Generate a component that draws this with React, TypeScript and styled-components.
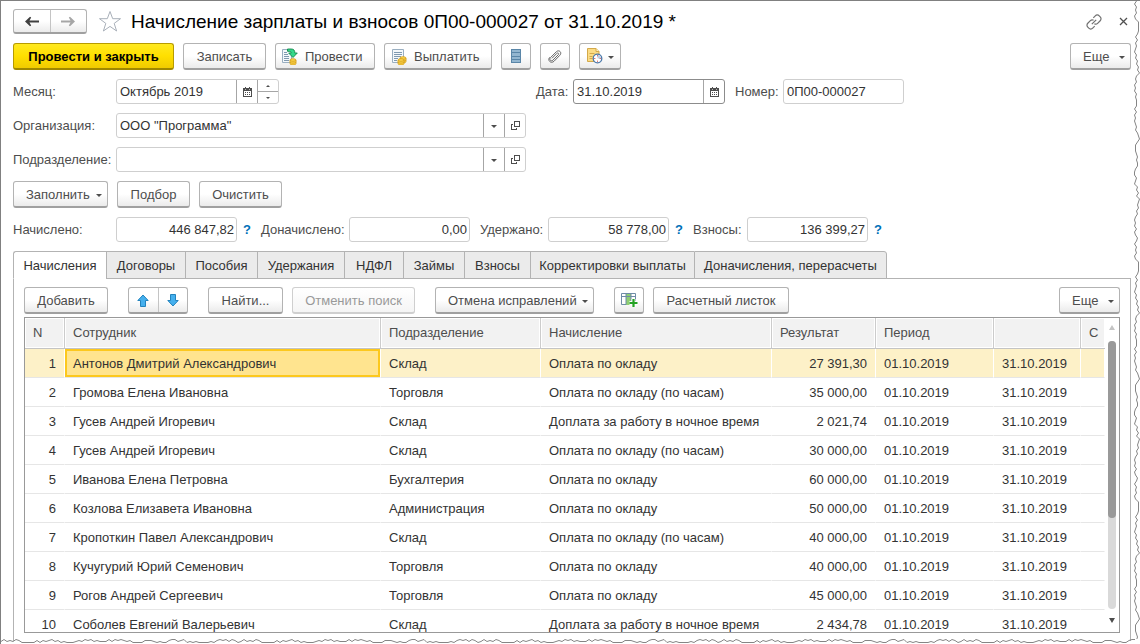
import React from "react";
import styled, { createGlobalStyle, css } from "styled-components";

const GlobalStyle = createGlobalStyle`
  *, *::before, *::after { box-sizing: border-box; }
  body { margin: 0; background: #fff; }
  body, button, input { font-family: "Liberation Sans", Arial, sans-serif; font-size: 13px; line-height: 15px; color: #4d4d4d; }
  button, input { margin: 0; padding: 0; border: 0; background: none; }
  svg { display: block; flex: none; }
`;

/* ---------- layout ---------- */

const Window = styled.main`
  position: relative;
  display: flex;
  flex-direction: column;
  gap: 9px;
  height: 100vh;
  min-height: 480px;
  padding: 8px 9px 3px 12px;
  border-left: 1px solid #808080;
  border-top: 1px solid #808080;
  overflow: hidden;
`;

const TitleRow = styled.header`
  display: flex;
  align-items: center;
  height: 25px;
`;

const Title = styled.h1`
  flex: 1;
  margin: 0 0 0 9px;
  font-size: 19px;
  line-height: 24px;
  font-weight: 400;
  color: #000;
  white-space: nowrap;
`;

const Bar = styled.div`
  display: flex;
  align-items: center;
  gap: 9px;
`;

const Spacer = styled.span`
  flex: 1;
`;

const Row = styled.div`
  display: flex;
  align-items: center;
  gap: 10px;
`;

const FormColumn = styled.div`
  display: flex;
  align-items: center;
  flex: 0 1 513px;
`;

const FieldGroup = styled.div`
  display: flex;
  align-items: center;
  gap: 6px;
`;

const Label = styled.label<{ $width?: number }>`
  flex: none;
  white-space: nowrap;
  ${(p) => p.$width && css`width: ${p.$width}px;`}
`;

/* ---------- controls ---------- */

const raised = css`
  border: 1px solid #b3b3b3;
  border-bottom: 2px solid #a0a0a0;
  border-radius: 3px;
  background: linear-gradient(#fff 0%, #fff 50%, #ebebeb 100%);
`;

const Button = styled.button<{ $width: number; $primary?: boolean; $menu?: boolean }>`
  ${raised}
  display: inline-flex;
  align-items: center;
  justify-content: ${(p) => (p.$menu ? "space-between" : "center")};
  flex: none;
  width: ${(p) => p.$width}px;
  height: 27px;
  padding: ${(p) => (p.$menu ? "0 5px 0 12px" : "0")};
  white-space: nowrap;
  ${(p) =>
    p.$primary &&
    css`
      border-color: #b79b00;
      border-bottom-color: #a08800;
      background: linear-gradient(#ffe920, #ffdf00 50%, #f0cb00);
      color: #000;
      font-weight: 700;
    `}
  &:disabled {
    color: #999;
    border-color: #cfcfcf;
    background: linear-gradient(#fff, #f5f5f5);
  }
`;

const WithIcon = styled(Button)`
  gap: 7px;
  justify-content: flex-start;
  padding: 0 0 0 6px;
`;

const IconMenuButton = styled(Button)`
  padding: 0 6px 0 7px;
`;

const Split = styled.div<{ $size: "nav" | "move" }>`
  ${raised}
  display: flex;
  flex: none;
  height: ${(p) => (p.$size === "nav" ? 25 : 27)}px;
  width: ${(p) => (p.$size === "nav" ? 74 : 60)}px;
  margin: ${(p) => (p.$size === "nav" ? "0" : "0 11px")};
`;

const SplitButton = styled.button`
  flex: 1;
  display: flex;
  align-items: center;
  justify-content: center;
  & + & {
    border-left: 1px solid #c4c4c4;
  }
`;

const BareButton = styled.button`
  display: flex;
  align-items: center;
  justify-content: center;
`;

const HeaderTools = styled.div`
  display: flex;
  align-items: center;
  gap: 17px;
  padding-right: 3px;
`;

const StarButton = styled(BareButton)`
  margin-left: 10px;
  width: 25px;
`;

const Triangle = styled.span`
  width: 0;
  border: 3px solid transparent;
  border-top-color: #4d4d4d;
  border-bottom: 0;
  margin-top: 2px;
`;

const FieldBox = styled.div<{ $width?: number; $strong?: boolean }>`
  display: flex;
  height: 25px;
  ${(p) => (p.$width ? css`flex: none; width: ${p.$width}px;` : css`flex: 1; min-width: 0;`)}
  border: 1px solid ${(p) => (p.$strong ? "#8c8c8c" : "#cfcfcf")};
  border-radius: 3px;
  background: #fff;
`;

const Input = styled.input<{ $right?: boolean }>`
  flex: 1;
  min-width: 0;
  width: 100%;
  padding: 0 2px 0 3px;
  color: #333;
  text-align: ${(p) => (p.$right ? "right" : "left")};
  outline: 0;
`;

const FieldButton = styled.button`
  display: flex;
  align-items: center;
  justify-content: center;
  flex: none;
  width: 21px;
  border-left: 1px solid #a6a6a6;
`;

const Spinner = styled.div`
  display: flex;
  flex-direction: column;
  flex: none;
  width: 21px;
  border-left: 1px solid #a6a6a6;
`;

const SpinButton = styled.button`
  flex: 1;
  display: flex;
  align-items: center;
  justify-content: center;
  & + & {
    border-top: 1px solid #a6a6a6;
  }
`;

const Help = styled.button`
  width: 8px;
  color: #0070b8;
  font-weight: 700;
`;

const MenuGroup = styled.div`
  display: flex;
  margin: 0 11px;
`;

/* ---------- tabs and panel ---------- */

const TabArea = styled.section`
  display: flex;
  flex-direction: column;
  flex: 1;
  min-height: 0;
`;

const TabList = styled.div`
  display: flex;
  position: relative;
  z-index: 1;
  margin-bottom: -1px;
`;

const Tab = styled.button<{ $active?: boolean; $width: number }>`
  flex: none;
  width: ${(p) => p.$width}px;
  height: 28px;
  color: #333;
  white-space: nowrap;
  border: 1px solid #b3b3b3;
  border-right-width: 0;
  border-bottom-color: ${(p) => (p.$active ? "#fff" : "#b3b3b3")};
  background: ${(p) => (p.$active ? "#fff" : "#ebebeb")};
  &:first-child {
    border-top-left-radius: 3px;
  }
  &:last-child {
    border-right-width: 1px;
    border-top-right-radius: 3px;
  }
`;

const Panel = styled.div`
  display: flex;
  flex-direction: column;
  flex: 1;
  min-height: 0;
  gap: 3px;
  padding: 8px 10px;
  border: 1px solid #b3b3b3;
  border-bottom: 0;
`;

const TableFrame = styled.div`
  display: flex;
  flex: 1;
  min-height: 0;
  border: 1px solid #999;
  overflow: hidden;
`;

const TableView = styled.div`
  flex: 1;
  min-width: 0;
  overflow: hidden;
`;

const Table = styled.table`
  width: 100%;
  table-layout: fixed;
  border-collapse: separate;
  border-spacing: 0;
`;

const Col = styled.col<{ $width?: number }>`
  ${(p) => p.$width && css`width: ${p.$width}px;`}
`;

const HeadCell = styled.th`
  height: 31px;
  padding: 0 0 2px 8px;
  overflow: hidden;
  white-space: nowrap;
  text-align: left;
  font-weight: 400;
  background: #f2f2f2;
  border-right: 1px solid #ccc;
  border-bottom: 1px solid #c4c4c4;
  box-shadow: inset 0 0 0 1px #fff;
  &:last-child {
    border-right: 0;
  }
`;

const Cell = styled.td<{ $right?: boolean }>`
  height: 29px;
  padding: 0 8px;
  overflow: hidden;
  white-space: nowrap;
  color: #333;
  text-align: ${(p) => (p.$right ? "right" : "left")};
  border-right: 1px solid transparent;
  border-bottom: 1px solid #e6e6e6;
`;

const CurrentCell = styled(Cell)`
  &&& {
    background: #ffe48f;
    background-clip: padding-box;
    box-shadow: inset 0 0 0 2px #fcc81e;
  }
`;

const BodyRow = styled.tr<{ $selected?: boolean }>`
  ${(p) =>
    p.$selected &&
    css`
      ${Cell} {
        background: #fdf1c8;
        border-right-color: #fff;
      }
    `}
`;

const ScrollBar = styled.div`
  display: flex;
  flex-direction: column;
  align-items: center;
  flex: none;
  width: 14px;
  padding: 7px 0 9px;
`;

const ScrollArrow = styled.button<{ $up?: boolean }>`
  width: 0;
  height: 5px;
  border: 3px solid transparent;
  ${(p) =>
    p.$up
      ? css`border-top: 0; border-bottom: 5px solid #c4c4c4;`
      : css`border-bottom: 0; border-top: 5px solid #4d4d4d;`}
`;

const ScrollTrack = styled.div`
  flex: 1;
  width: 8px;
  margin: 11px 0 9px;
  border-radius: 4px;
  background: #d9d9d9;
`;

const ScrollThumb = styled.div`
  height: 66%;
  border-radius: 4px;
  background: #999;
`;

const TornRight = styled.svg`
  position: absolute;
  top: 0;
  right: 0;
  width: 8px;
  height: calc(100% - 5px);
  pointer-events: none;
`;

const TornBottom = styled.svg`
  position: absolute;
  left: 0;
  bottom: 0;
  width: calc(100% - 5px);
  height: 7px;
  pointer-events: none;
`;

/* ---------- icons ---------- */

const Arrow = ({ right }: { right?: boolean }) => (
  <svg width="14" height="11" viewBox="0 0 14 11" fill={right ? "#a6a6a6" : "#404040"}>
    {right ? <path d="M0 4.500h9.500L7.800 1.500 9 .7l5 4.800-5 4.800-1.200-.8 1.700-3H0z" /> : <path d="M14 4.500H4.500l1.700-3L5 .7 0 5.500l5 4.800 1.200-.8-1.700-3H14z" />}
  </svg>
);

const Star = () => (
  <svg width="24" height="23" viewBox="0 0 24 23" fill="#fff" stroke="#a9b0b9">
    <path d="M12 1.500l2.700 7.200h7.800l-6.300 4.700 2.400 7.600L12 16.400 5.400 21l2.400-7.600-6.300-4.700h7.800z" />
  </svg>
);

const LinkIcon = () => (
  <svg width="16" height="16" viewBox="0 0 16 16" fill="none" stroke="#707070" strokeWidth="1.200">
    <path d="M7.300 3.800l2-2a2.700 2.700 0 0 1 3.900 0l1 1a2.700 2.700 0 0 1 0 3.900l-2.600 2.600a2.700 2.700 0 0 1-3.200.4M8.700 12.200l-2 2a2.700 2.700 0 0 1-3.900 0l-1-1a2.700 2.700 0 0 1 0-3.900l2.600-2.600a2.700 2.700 0 0 1 3.200-.4M5.800 10.200l4.400-4.400" />
  </svg>
);

const Cross = () => (
  <svg width="9" height="9" viewBox="0 0 9 9" stroke="#505050" strokeWidth="1.300">
    <path d="M1 1l7 7M8 1L1 8" />
  </svg>
);

const Coins = ({ x, y }: { x: number; y: number }) => (
  <g transform={`translate(${x} ${y})`} fill="#fbd34b" stroke="#d4a01c" strokeWidth=".8">
    <path d="M.5 2v3.500c0 2 6 2 6 0V2" />
    <path d="M.5 3.800c0 1.800 6 1.800 6 0" fill="none" />
    <ellipse cx="3.500" cy="2" rx="3" ry="1.300" />
  </g>
);

const PostIcon = () => (
  <svg width="16" height="17" viewBox="0 0 16 17">
    <path d="M.5 1.500h9v13h-9z" fill="#f4f8fb" stroke="#9aafc1" />
    <path d="M2 4.500h3M2 6.500h4M2 8.500h5M2 10.500h5M2 12.500h5" stroke="#7f99b0" />
    <path d="M5.500 1H9c3 0 3.800 1.500 3.800 4h2.500l-4.300 4.500L6.700 5h2.500c0-1.200-.7-1.700-3.700-1.700z" fill="#35d88a" stroke="#128a4c" strokeWidth=".9" />
    <Coins x={7.500} y={10} />
  </svg>
);

const PayIcon = () => (
  <svg width="16" height="17" viewBox="0 0 16 17">
    <path d="M1.500 1.500h11v13h-11z" fill="#f4f8fb" stroke="#9aafc1" />
    <path d="M3 4.500h8M3 6.500h8M3 8.500h7M3 10.500h4M3 12.500h3" stroke="#7f99b0" />
    <Coins x={8.500} y={8} />
    <Coins x={6.500} y={10} />
  </svg>
);

const ListIcon = () => (
  <svg width="10" height="14" viewBox="0 0 10 14" shapeRendering="crispEdges">
    <path d="M0 0h10v14H0z" fill="#5a86a8" />
    <path d="M1 1h8v2H1zM1 4h8v3H1zM1 8h8v2H1zM1 11h8v2H1z" fill="#93b6d0" />
  </svg>
);

const Clip = () => (
  <svg width="14" height="14" viewBox="0 0 14 14" fill="none" stroke="#666">
    <path d="M4 9.300l4.800-4.900c1.200-1.200 2.600.2 1.400 1.400L5 11.100c-1.900 1.900-4.400-.6-2.500-2.500L8.300 2.800c2.700-2.700 6.200.8 3.500 3.500L6 12.300c-3 2.800-7-1-4.300-4" />
  </svg>
);

const ReportIcon = () => (
  <svg width="16" height="16" viewBox="0 0 16 16">
    <path d="M.5.500h8.500l3 3v10H.5z" fill="#fbdc85" stroke="#d3a94a" />
    <path d="M9 .5v3h3" fill="#fff2c4" stroke="#d3a94a" />
    <path d="M2.500 5.500h5M2.500 8.500h3M2.500 10.500h3" stroke="#d3a94a" />
    <circle cx="10.500" cy="10.500" r="4.300" fill="#fff" stroke="#4b78a8" strokeWidth="1.300" />
    <path d="M10.500 10.500V7A3.500 3.500 0 0 1 14 10.500z" fill="#b9cfe6" />
    <path d="M10.500 7.300v1M10.500 12.700v1M7.300 10.500h1M12.700 10.500h1" stroke="#d23c3c" />
  </svg>
);

const Calendar = () => (
  <svg width="9" height="10" viewBox="0 0 9 10" shapeRendering="crispEdges">
    <path d="M0 1h9v9H0z" fill="#4d4d4d" />
    <path d="M2 0h1v1H2zM6 0h1v1H6z" fill="#4d4d4d" />
    <path d="M1 4h7v5H1z" fill="#fff" />
    <path d="M2 5h1v1H2zM4 5h1v1H4zM6 5h1v1H6zM2 7h1v1H2zM4 7h1v1H4zM6 7h1v1H6z" fill="#4d4d4d" />
    <path d="M2 2h1v1H2zM6 2h1v1H6z" fill="#bbb" />
  </svg>
);

const OpenIcon = () => (
  <svg width="9" height="9" viewBox="0 0 9 9" fill="none" stroke="#4d4d4d" shapeRendering="crispEdges">
    <path d="M3.500.5h5v5h-5zM2 3.500H.5v5h5V7" />
  </svg>
);

const MoveArrow = ({ down }: { down?: boolean }) => (
  <svg width="12" height="13" viewBox="0 0 12 13" fill="#45b0ee" stroke="#2383bd">
    <path d={down ? "M6 12L.8 6.500h2.700v-6h5v6h2.700z" : "M6 1l5.200 5.500H8.500v6h-5v-6H.8z"} />
  </svg>
);

const AddColumn = () => (
  <svg width="17" height="15" viewBox="0 0 17 15">
    <path d="M.5.500h14v11H.5z" fill="#fff" stroke="#6f8ca6" />
    <path d="M5 1h5v11H5z" fill="#8fce72" />
    <path d="M.5 3.500h14M5 .5v11M10 .5v11" stroke="#6f8ca6" fill="none" />
    <path d="M12.500 6v8M8.500 10h8" stroke="#fff" strokeWidth="4" />
    <path d="M12.500 6v8M8.500 10h8" stroke="#25a325" strokeWidth="2.200" />
  </svg>
);

/* Offsets of the torn line across its edge, one every three pixels. */
const tornProfile = [
  4, 2, 4, 3, 4, 2, 3, 6, 6, 6, 6, 5, 3, 5, 3, 4, 3, 2, 4, 3, 5, 4, 6, 5, 7, 4, 3, 4, 2, 3, 2, 4, 3, 4, 4, 4, 2, 4, 2, 3, 2, 3, 4, 3,
  5, 6, 7, 5, 3, 3, 3, 4, 5, 4, 5, 5, 3, 2, 2, 4, 3, 2, 5, 4, 6, 4, 7, 6, 5, 6, 4, 5, 3, 2, 3, 2, 4, 2, 3, 5,
];
const tornLength = tornProfile.length * 3;
const tornPoints = (across: (offset: number, along: number) => string) =>
  [...tornProfile, tornProfile[0]].map((offset, i) => across(offset, i * 3)).join(" ");

const TornEdges = () => (
  <>
    <TornRight>
      <defs>
        <pattern id="torn-v" width="8" height={tornLength} patternUnits="userSpaceOnUse">
          <polyline points={tornPoints((o, t) => `${o + 0.5},${t}`)} fill="none" stroke="#858585" />
        </pattern>
      </defs>
      <rect width="8" height="100%" fill="url(#torn-v)" />
    </TornRight>
    <TornBottom>
      <defs>
        <pattern id="torn-h" width={tornLength} height="7" patternUnits="userSpaceOnUse">
          <polyline points={tornPoints((o, t) => `${t},${o > 5 ? 5.5 : o + 0.5}`)} fill="none" stroke="#858585" />
        </pattern>
      </defs>
      <rect y="5" width="100%" height="2" fill="#fff" />
      <rect width="100%" height="7" fill="url(#torn-h)" />
    </TornBottom>
  </>
);

/* ---------- data ---------- */

const tabs = [
  { title: "Начисления", width: 93 },
  { title: "Договоры", width: 79 },
  { title: "Пособия", width: 72 },
  { title: "Удержания", width: 87 },
  { title: "НДФЛ", width: 59 },
  { title: "Займы", width: 61 },
  { title: "Взносы", width: 66 },
  { title: "Корректировки выплаты", width: 164 },
  { title: "Доначисления, перерасчеты", width: 193 },
];

const columns: { title: string; width?: number }[] = [
  { title: "N", width: 40 },
  { title: "Сотрудник" },
  { title: "Подразделение", width: 160 },
  { title: "Начисление", width: 231 },
  { title: "Результат", width: 104 },
  { title: "Период", width: 118 },
  { title: "", width: 87 },
  { title: "С", width: 24 },
];

const rows = [
  ["Антонов Дмитрий Александрович", "Склад", "Оплата по окладу", "27 391,30"],
  ["Громова Елена Ивановна", "Торговля", "Оплата по окладу (по часам)", "35 000,00"],
  ["Гусев Андрей Игоревич", "Склад", "Доплата за работу в ночное время", "2 021,74"],
  ["Гусев Андрей Игоревич", "Склад", "Оплата по окладу (по часам)", "30 000,00"],
  ["Иванова Елена Петровна", "Бухгалтерия", "Оплата по окладу", "60 000,00"],
  ["Козлова Елизавета Ивановна", "Администрация", "Оплата по окладу", "50 000,00"],
  ["Кропоткин Павел Александрович", "Склад", "Оплата по окладу (по часам)", "40 000,00"],
  ["Кучугурий Юрий Семенович", "Торговля", "Оплата по окладу", "40 000,00"],
  ["Рогов Андрей Сергеевич", "Торговля", "Оплата по окладу", "45 000,00"],
  ["Соболев Евгений Валерьевич", "Склад", "Доплата за работу в ночное время", "2 434,78"],
];

const totals = [
  { id: "accrued", label: "Начислено:", width: 97, value: "446 847,82", help: true },
  { id: "extra", label: "Доначислено:", width: 82, value: "0,00", help: false },
  { id: "withheld", label: "Удержано:", width: 62, value: "58 778,00", help: true },
  { id: "fees", label: "Взносы:", width: 48, value: "136 399,27", help: true },
];

const LookupField = ({ id, label, value }: { id: string; label: string; value: string }) => (
  <Row>
    <FormColumn>
      <Label $width={103} htmlFor={id}>{label}</Label>
      <FieldBox>
        <Input id={id} defaultValue={value} />
        <FieldButton aria-label="Выбрать"><Triangle /></FieldButton>
        <FieldButton aria-label="Открыть"><OpenIcon /></FieldButton>
      </FieldBox>
    </FormColumn>
  </Row>
);

export default function App() {
  return (
    <>
      <GlobalStyle />
      <Window>
        <TitleRow>
          <Split $size="nav">
            <SplitButton aria-label="Назад"><Arrow /></SplitButton>
            <SplitButton aria-label="Вперед"><Arrow right /></SplitButton>
          </Split>
          <StarButton aria-label="В избранное"><Star /></StarButton>
          <Title>Начисление зарплаты и взносов 0П00-000027 от 31.10.2019 *</Title>
          <HeaderTools>
            <BareButton aria-label="Ссылка"><LinkIcon /></BareButton>
            <BareButton aria-label="Закрыть"><Cross /></BareButton>
          </HeaderTools>
        </TitleRow>

        <Bar>
          <Button $width={161} $primary>Провести и закрыть</Button>
          <Button $width={83}>Записать</Button>
          <WithIcon $width={100}><PostIcon />Провести</WithIcon>
          <WithIcon $width={108}><PayIcon />Выплатить</WithIcon>
          <Button $width={30} aria-label="Список"><ListIcon /></Button>
          <Button $width={30} aria-label="Файлы"><Clip /></Button>
          <IconMenuButton $width={42} $menu aria-label="Отчеты"><ReportIcon /><Triangle /></IconMenuButton>
          <Spacer />
          <Button $width={61} $menu>Еще<Triangle /></Button>
        </Bar>

        <Row>
          <FormColumn>
            <Label $width={103} htmlFor="month">Месяц:</Label>
            <FieldBox $width={163}>
              <Input id="month" defaultValue="Октябрь 2019" />
              <FieldButton aria-label="Календарь"><Calendar /></FieldButton>
              <Spinner>
                <SpinButton aria-label="Больше">
                  <svg width="4" height="2"><path d="M0 2l2-2 2 2z" fill="#4d4d4d" /></svg>
                </SpinButton>
                <SpinButton aria-label="Меньше">
                  <svg width="4" height="2"><path d="M0 0l2 2 2-2z" fill="#4d4d4d" /></svg>
                </SpinButton>
              </Spinner>
            </FieldBox>
          </FormColumn>
          <FieldGroup>
            <Label $width={31} htmlFor="date">Дата:</Label>
            <FieldBox $width={152} $strong>
              <Input id="date" defaultValue="31.10.2019" />
              <FieldButton aria-label="Календарь"><Calendar /></FieldButton>
            </FieldBox>
          </FieldGroup>
          <FieldGroup>
            <Label $width={42} htmlFor="number">Номер:</Label>
            <FieldBox $width={121}>
              <Input id="number" defaultValue="0П00-000027" />
            </FieldBox>
          </FieldGroup>
        </Row>

        <LookupField id="org" label="Организация:" value={'ООО "Программа"'} />
        <LookupField id="dept" label="Подразделение:" value="" />

        <Bar>
          <Button $width={95} $menu>Заполнить<Triangle /></Button>
          <Button $width={73}>Подбор</Button>
          <Button $width={83}>Очистить</Button>
        </Bar>

        <Row>
          {totals.map((t) => (
            <FieldGroup key={t.id}>
              <Label $width={t.width} htmlFor={t.id}>{t.label}</Label>
              <FieldBox $width={121}>
                <Input id={t.id} $right defaultValue={t.value} />
              </FieldBox>
              {t.help && <Help aria-label="Подсказка">?</Help>}
            </FieldGroup>
          ))}
        </Row>

        <TabArea>
          <TabList role="tablist">
            {tabs.map((t, i) => (
              <Tab key={t.title} role="tab" aria-selected={i === 0} $active={i === 0} $width={t.width}>{t.title}</Tab>
            ))}
          </TabList>
          <Panel role="tabpanel">
            <Bar>
              <Button $width={84}>Добавить</Button>
              <Split $size="move">
                <SplitButton aria-label="Переместить вверх"><MoveArrow /></SplitButton>
                <SplitButton aria-label="Переместить вниз"><MoveArrow down /></SplitButton>
              </Split>
              <Button $width={75}>Найти...</Button>
              <Button $width={123} disabled>Отменить поиск</Button>
              <MenuGroup>
                <Button $width={159} $menu>Отмена исправлений<Triangle /></Button>
              </MenuGroup>
              <Button $width={30} aria-label="Добавить колонку"><AddColumn /></Button>
              <Button $width={136}>Расчетный листок</Button>
              <Spacer />
              <Button $width={61} $menu>Еще<Triangle /></Button>
            </Bar>
            <TableFrame>
              <TableView>
                <Table>
                  <colgroup>
                    {columns.map((c, i) => <Col key={i} $width={c.width} />)}
                  </colgroup>
                  <thead>
                    <tr>{columns.map((c, i) => <HeadCell key={i} scope="col">{c.title}</HeadCell>)}</tr>
                  </thead>
                  <tbody>
                    {rows.map(([name, dept, kind, sum], i) => (
                      <BodyRow key={i} $selected={i === 0}>
                        <Cell $right>{i + 1}</Cell>
                        {i === 0 ? <CurrentCell>{name}</CurrentCell> : <Cell>{name}</Cell>}
                        <Cell>{dept}</Cell>
                        <Cell>{kind}</Cell>
                        <Cell $right>{sum}</Cell>
                        <Cell>01.10.2019</Cell>
                        <Cell>31.10.2019</Cell>
                        <Cell />
                      </BodyRow>
                    ))}
                  </tbody>
                </Table>
              </TableView>
              <ScrollBar>
                <ScrollArrow $up aria-label="Прокрутить вверх" />
                <ScrollTrack><ScrollThumb /></ScrollTrack>
                <ScrollArrow aria-label="Прокрутить вниз" />
              </ScrollBar>
            </TableFrame>
          </Panel>
        </TabArea>
        <TornEdges />
      </Window>
    </>
  );
}
